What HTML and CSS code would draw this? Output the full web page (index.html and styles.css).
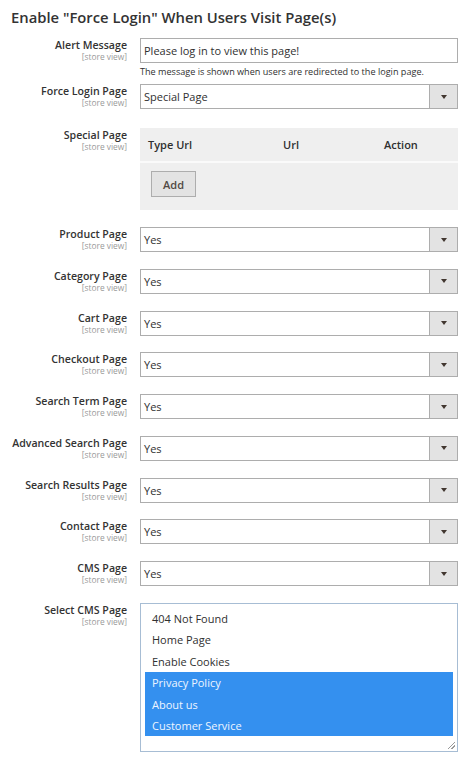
FILE: index.html
```html
<!DOCTYPE html>
<html lang="en">
<head>
<meta charset="UTF-8" />
<meta name="viewport" content="width=device-width, initial-scale=1" />
<title>Force Login</title>
<link rel="stylesheet" href="styles.css">
</head>
<body>
  <div class="section">
    <h2 class="section-title">Enable "Force Login" When Users Visit Page(s)</h2>

    <div class="field field-alert">
      <div class="label"><span class="label-text">Alert Message</span><span class="scope">[store view]</span></div>
      <div class="control">
        <div class="input">Please log in to view this page!</div>
        <div class="note">The message is shown when users are redirected to the login page.</div>
      </div>
    </div>

    <div class="field field-login">
      <div class="label"><span class="label-text">Force Login Page</span><span class="scope">[store view]</span></div>
      <div class="control">
        <div class="select"><span class="select-value">Special Page</span><span class="select-arrow"></span></div>
      </div>
    </div>

    <div class="field field-special">
      <div class="label"><span class="label-text">Special Page</span><span class="scope">[store view]</span></div>
      <div class="control">
        <div class="grid-table">
          <div class="grid-head">
            <span class="col-type">Type Url</span>
            <span class="col-url">Url</span>
            <span class="col-action">Action</span>
          </div>
          <div class="grid-body">
            <button class="btn-add">Add</button>
          </div>
        </div>
      </div>
    </div>

    <div class="field">
      <div class="label"><span class="label-text">Product Page</span><span class="scope">[store view]</span></div>
      <div class="control"><div class="select"><span class="select-value">Yes</span><span class="select-arrow"></span></div></div>
    </div>
    <div class="field">
      <div class="label"><span class="label-text">Category Page</span><span class="scope">[store view]</span></div>
      <div class="control"><div class="select"><span class="select-value">Yes</span><span class="select-arrow"></span></div></div>
    </div>
    <div class="field">
      <div class="label"><span class="label-text">Cart Page</span><span class="scope">[store view]</span></div>
      <div class="control"><div class="select"><span class="select-value">Yes</span><span class="select-arrow"></span></div></div>
    </div>
    <div class="field">
      <div class="label"><span class="label-text">Checkout Page</span><span class="scope">[store view]</span></div>
      <div class="control"><div class="select"><span class="select-value">Yes</span><span class="select-arrow"></span></div></div>
    </div>
    <div class="field">
      <div class="label"><span class="label-text">Search Term Page</span><span class="scope">[store view]</span></div>
      <div class="control"><div class="select"><span class="select-value">Yes</span><span class="select-arrow"></span></div></div>
    </div>
    <div class="field">
      <div class="label"><span class="label-text">Advanced Search Page</span><span class="scope">[store view]</span></div>
      <div class="control"><div class="select"><span class="select-value">Yes</span><span class="select-arrow"></span></div></div>
    </div>
    <div class="field">
      <div class="label"><span class="label-text">Search Results Page</span><span class="scope">[store view]</span></div>
      <div class="control"><div class="select"><span class="select-value">Yes</span><span class="select-arrow"></span></div></div>
    </div>
    <div class="field">
      <div class="label"><span class="label-text">Contact Page</span><span class="scope">[store view]</span></div>
      <div class="control"><div class="select"><span class="select-value">Yes</span><span class="select-arrow"></span></div></div>
    </div>
    <div class="field field-cms">
      <div class="label"><span class="label-text">CMS Page</span><span class="scope">[store view]</span></div>
      <div class="control"><div class="select"><span class="select-value">Yes</span><span class="select-arrow"></span></div></div>
    </div>

    <div class="field">
      <div class="label"><span class="label-text">Select CMS Page</span><span class="scope">[store view]</span></div>
      <div class="control">
        <div class="multiselect">
          <div class="option">404 Not Found</div>
          <div class="option">Home Page</div>
          <div class="option">Enable Cookies</div>
          <div class="option selected">Privacy Policy</div>
          <div class="option selected">About us</div>
          <div class="option selected">Customer Service</div>
          <span class="resize-grip"></span>
        </div>
      </div>
    </div>
  </div>
</body>
</html>
```

FILE: styles.css
```css
* {
  box-sizing: border-box;
  margin: 0;
  padding: 0;
}

body {
  background: #fff;
  font-family: 'Open Sans', 'Noto Sans', sans-serif;
  color: #303030;
}

.section {
  padding: 7px 0 0 11px;
}

.section-title {
  font-size: 14.8px;
  font-weight: 600;
  line-height: 20px;
  color: #333;
  margin-bottom: 11px;
}

.field {
  display: grid;
  grid-template-columns: 117px 318px;
  column-gap: 12px;
  margin-bottom: 16.75px;
}

.field-alert {
  margin-bottom: 5px;
}

.field-login {
  margin-bottom: 19px;
}

.field-special {
  margin-bottom: 17px;
}

.field-cms {
  margin-bottom: 17px;
}

.label {
  display: flex;
  flex-direction: column;
  align-items: flex-end;
  text-align: right;
  padding-right: 1px;
}

.label-text {
  font-size: 10.6px;
  font-weight: 600;
  line-height: 14px;
  color: #333;
  white-space: nowrap;
}

.scope {
  font-size: 8.4px;
  line-height: 10px;
  color: #9a9a9a;
  white-space: nowrap;
}

.input {
  height: 25px;
  border: 1px solid #adadad;
  font-size: 11px;
  line-height: 23px;
  padding-left: 3px;
  color: #303030;
}

.note {
  font-size: 9.1px;
  line-height: 14px;
  margin-top: 2px;
  color: #303030;
}

.select {
  height: 25px;
  border: 1px solid #adadad;
  display: flex;
  background: #fff;
}

.select-value {
  flex: 1;
  font-size: 11px;
  line-height: 23px;
  padding-left: 3px;
}

.select-arrow {
  width: 28px;
  background: #e3e3e3;
  border-left: 1px solid #adadad;
  display: flex;
  align-items: center;
  justify-content: center;
}

.select-arrow::after {
  content: "";
  border-left: 3px solid transparent;
  border-right: 3px solid transparent;
  border-top: 4px solid #41362f;
}

.grid-table {
  background: #efefef;
  height: 82px;
}

.grid-head {
  height: 35px;
  border-bottom: 2px solid #fafafa;
  display: grid;
  grid-template-columns: 135px 101px 1fr;
  align-items: center;
  padding-left: 8px;
  font-size: 11px;
  font-weight: 600;
}

.grid-body {
  padding: 8px 0 0 11px;
}

.btn-add {
  width: 45px;
  height: 26px;
  background: #e3e3e3;
  border: 1px solid #adadad;
  font-family: inherit;
  font-size: 11px;
  font-weight: 600;
  color: #514943;
}

.multiselect {
  position: relative;
  height: 149px;
  border: 1px solid #a7bdd4;
  padding: 4px 4px 0 4px;
}

.option {
  height: 21.4px;
  line-height: 21.4px;
  font-size: 11px;
  padding-left: 7px;
  color: #303030;
}

.option.selected {
  background: #3490ef;
  color: #eef5ff;
}

.resize-grip {
  position: absolute;
  right: 2px;
  bottom: 2px;
  width: 7px;
  height: 7px;
  background: linear-gradient(135deg, transparent 45%, #9a9a9a 45%, #9a9a9a 55%, transparent 55%, transparent 70%, #9a9a9a 70%, #9a9a9a 80%, transparent 80%);
}
```
